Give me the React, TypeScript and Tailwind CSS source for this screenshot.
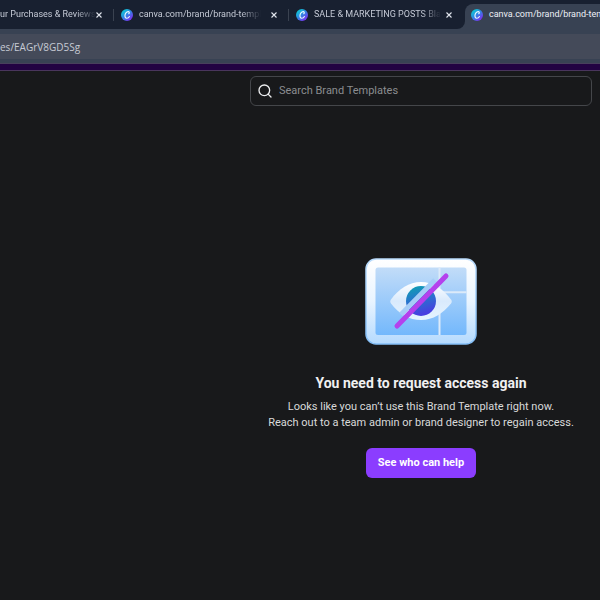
import { Search } from "lucide-react";

const TABS = [
  { title: "canva.com/brand/brand-templ", name: "Brand Templates" },
  { title: "SALE & MARKETING POSTS Bla", name: "Marketing Posts" },
];

function CanvaIcon() {
  return (
    <svg viewBox="0 0 24 24" className="size-3 shrink-0" aria-hidden="true">
      <defs>
        <linearGradient id="canva" x1="0.1" y1="0.1" x2="0.8" y2="0.9">
          <stop offset="0" stopColor="#08cfd3" />
          <stop offset="0.5" stopColor="#3187e4" />
          <stop offset="1" stopColor="#7a30f0" />
        </linearGradient>
      </defs>
      <circle cx="12" cy="12" r="12" fill="url(#canva)" />
      <path
        d="M15.500 9.500c1.500-1 1.700-4-.8-4.300C11 4.800 7.900 9.600 7.900 13.700c0 3 1.400 4.900 3.700 4.900 2.200 0 4.100-1.500 5.200-3.700"
        fill="none"
        stroke="#eefcff"
        strokeWidth="2.200"
        strokeLinecap="round"
      />
    </svg>
  );
}

function CloseButton({ label }: { label: string }) {
  return (
    <button type="button" aria-label={label} className="shrink-0 text-[#e2e6ee]">
      <svg viewBox="0 0 6 6" className="size-1.5" aria-hidden="true">
        <path d="M.5.5l5 5m0-5l-5 5" stroke="currentColor" strokeWidth="1.100" />
      </svg>
    </button>
  );
}

function TabBar() {
  return (
    <nav
      aria-label="Tabs"
      className="flex h-[29px] bg-[#384253] font-[Roboto,sans-serif] text-[9px] whitespace-nowrap text-[#c5cad6]"
    >
      <div className="flex w-[465px] shrink-0 rounded-br-lg bg-[#182030]">
        <div className="flex w-[113px] items-center justify-between pr-[11px]">
          <span className="[mask-image:linear-gradient(to_right,black_calc(100%-20px),transparent)]">
            ur Purchases &amp; Reviews
          </span>
          <CloseButton label="Close Purchases & Reviews" />
        </div>
        {TABS.map((tab) => (
          <div key={tab.name} className="flex w-[175px] items-center pr-[11px]">
            <span className="mr-[7px] h-3 w-px shrink-0 bg-[#3a4250]" />
            <CanvaIcon />
            <span className="ml-1.5 flex-1">
              <span className="[mask-image:linear-gradient(to_right,black_calc(100%-20px),transparent)]">
                {tab.title}
              </span>
            </span>
            <CloseButton label={`Close ${tab.name}`} />
          </div>
        ))}
      </div>
      <div className="flex min-w-0 flex-1 bg-[#182030]">
        <div className="mt-1 flex min-w-0 flex-1 items-center gap-1.5 rounded-tl-lg bg-[#384253] pb-1 pl-1.5 text-[#edf0f6]">
          <CanvaIcon />
          <span>canva.com/brand/brand-tem</span>
        </div>
      </div>
    </nav>
  );
}

function AddressBar() {
  return (
    <div className="bg-[#384253] pt-[5px] pb-1">
      <input
        type="text"
        aria-label="Address"
        defaultValue="es/EAGrV8GD5Sg"
        className="block h-[25px] w-full bg-[#444a59] font-['Open_Sans','Noto_Sans',sans-serif] text-[10px] text-[#c7cbd5] outline-none"
      />
    </div>
  );
}

function HiddenTemplateArt() {
  return (
    <svg viewBox="0 0 112 87" className="w-28" aria-hidden="true">
      <defs>
        <linearGradient id="frame" x1="0" y1="0" x2="0" y2="1">
          <stop offset="0" stopColor="#ffffff" />
          <stop offset="0.5" stopColor="#e9f4ff" />
          <stop offset="1" stopColor="#b4dafe" />
        </linearGradient>
        <linearGradient id="edge" x1="0" y1="0" x2="0" y2="1">
          <stop offset="0" stopColor="#b9dbfc" />
          <stop offset="1" stopColor="#84bff8" />
        </linearGradient>
        <linearGradient id="panel" x1="0" y1="0" x2="0" y2="1">
          <stop offset="0" stopColor="#c2dcf8" />
          <stop offset="1" stopColor="#73b8fc" />
        </linearGradient>
        <linearGradient id="eye" x1="0" y1="0" x2="0" y2="1">
          <stop offset="0" stopColor="#ffffff" />
          <stop offset="0.5" stopColor="#d9eafc" />
          <stop offset="1" stopColor="#e5f4ff" />
        </linearGradient>
        <linearGradient id="iris" x1="0" y1="0" x2="0.3" y2="1">
          <stop offset="0" stopColor="#0ba5ae" />
          <stop offset="0.5" stopColor="#2776cd" />
          <stop offset="1" stopColor="#473fe0" />
        </linearGradient>
      </defs>
      <rect x="1" y="1" width="110" height="85" rx="10" fill="url(#frame)" stroke="url(#edge)" strokeWidth="1.500" />
      <rect x="10.500" y="9.500" width="91" height="67.500" rx="2.500" fill="url(#panel)" />
      <path d="M74.500 9v68M74.500 34.300h27" stroke="#dceaf9" strokeWidth="2" fill="none" />
      <path
        d="M26 41.500C34 30.500 44 24 56 24s22 7 30 17.500C87 43 87 44 86 45.500 78 55.500 68 62 56 62S34 56 26 45.500c-1-1.500-1-2.500 0-4z"
        fill="url(#eye)"
      />
      <circle cx="56" cy="43" r="15" fill="url(#iris)" />
      <path d="M36 56.500L70 22" stroke="#a5cdf7" strokeWidth="5" />
      <path d="M32 68l49-50" stroke="#b441ed" strokeWidth="5" strokeLinecap="round" />
    </svg>
  );
}

export default function App() {
  return (
    <div className="flex min-h-screen flex-col bg-[#18191b]">
      <TabBar />
      <AddressBar />
      <div className="h-2 border-y border-t-[#48405c] border-b-[#49355c] bg-[#220342]" />
      <main className="ml-[242px] flex flex-1 flex-col px-2 pt-[5px] font-[Roboto,sans-serif]">
        <label className="flex h-[30px] items-center gap-1.5 rounded-md border border-[#44464a] px-1.5">
          <Search className="size-4 shrink-0 text-[#edeef0]" strokeWidth={2} aria-hidden="true" />
          <input
            type="search"
            aria-label="Search Brand Templates"
            placeholder="Search Brand Templates"
            className="min-w-0 flex-1 bg-transparent text-[11px] text-white outline-none placeholder:text-[#8b8d90]"
          />
        </label>
        <section className="mt-[152px] flex flex-col items-center text-center">
          <HiddenTemplateArt />
          <h1 className="mt-7 text-[14px] leading-5 font-bold text-[#f0f0f1]">
            You need to request access again
          </h1>
          <p className="mt-1.5 text-[11px] leading-4 text-[#d8d9da]">
            Looks like you can’t use this Brand Template right now.
            <br />
            Reach out to a team admin or brand designer to regain access.
          </p>
          <button
            type="button"
            className="mt-[17px] h-[30px] rounded-md bg-[#8b3dff] px-3 text-[11px] font-bold text-white"
          >
            See who can help
          </button>
        </section>
      </main>
    </div>
  );
}
